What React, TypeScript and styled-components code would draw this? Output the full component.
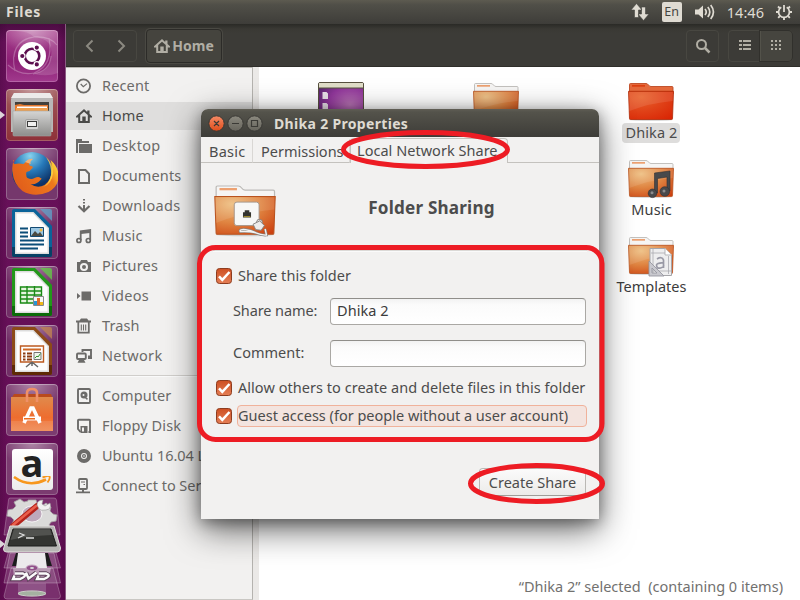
import React from "react";
import styled, { createGlobalStyle, css } from "styled-components";

const GlobalStyle = createGlobalStyle`
  * { box-sizing: border-box; }
  body { margin: 0; overflow: hidden; }
`;

const Screen = styled.div`
  position: relative;
  display: flex;
  flex-direction: column;
  width: 800px;
  height: 600px;
  overflow: hidden;
  font: 14.5px/20px "Noto Sans", "Open Sans", sans-serif;
  color: #4c4c4c;
  background: #fff;
`;

const Label = styled.span<{ $track?: number }>`
  white-space: pre;
  letter-spacing: ${(p) => p.$track ?? 0}px;
`;

/* ---------- top panel ---------- */

const Panel = styled.header`
  display: flex;
  align-items: center;
  justify-content: space-between;
  flex: none;
  height: 24px;
  padding: 0 8px 0 6px;
  color: #dfdbd2;
  background: linear-gradient(#5d5b50, #504f48 20%, #3e3d39);
`;
const AppName = styled(Label)`
  font-weight: 700;
  font-size: 14px;
`;
const Indicators = styled.div`
  display: flex;
  align-items: center;
  gap: 12px;
  svg { display: block; }
`;
const Clock = styled(Label)`
  margin-top: -1px;
`;
const Keyboard = styled.span`
  width: 20px;
  height: 20px;
  border-radius: 2px;
  background: #dfdbd2;
  color: #45443f;
  font-size: 12.5px;
  line-height: 20px;
  text-align: center;
`;

/* ---------- launcher ---------- */

const Desk = styled.div`
  display: flex;
  flex: 1;
  min-height: 0;
`;
const Launcher = styled.nav`
  display: flex;
  flex-direction: column;
  flex: none;
  gap: 7px;
  width: 66px;
  padding-top: 6px;
  border-right: 1px solid #8b5a83;
  background: linear-gradient(90deg, rgba(40, 0, 35, .18), transparent 12% 88%, rgba(40, 0, 35, .22)),
    linear-gradient(#4d0c43, #68105a 18px, #640e55);
`;
const Slot = styled.div<{ $running?: boolean }>`
  display: flex;
  align-items: center;
  gap: 1px;
  padding-left: ${(p) => (p.$running ? 0 : 6)}px;
`;
const RunMark = styled.i`
  width: 5px;
  border: 4px solid transparent;
  border-left: 5px solid #dcd5da;
  border-right: 0;
`;
const Tile = styled.div<{ $tint: string }>`
  display: flex;
  align-items: center;
  justify-content: center;
  width: 52px;
  height: 52px;
  border-radius: 4px;
  background: radial-gradient(ellipse 60% 45% at 50% 0, rgba(255, 255, 255, .38), transparent), ${(p) => p.$tint};
  box-shadow: inset 0 0 0 1px rgba(255, 255, 255, .22), inset 0 1px 1px rgba(255, 255, 255, .2);
  svg { display: block; }
`;
const Folded = styled.div`
  margin-top: -5px;
  height: 104px;
  svg { display: block; }
`;

/* ---------- file manager ---------- */

const Manager = styled.main`
  display: flex;
  flex-direction: column;
  flex: 1;
  min-width: 0;
`;
const Toolbar = styled.div`
  display: flex;
  align-items: center;
  flex: none;
  height: 43px;
  padding: 0 7px;
  color: #b1aea4;
  background: linear-gradient(#2a2a26, #3a3934 5px, #3c3b37 10px);
  border-bottom: 1px solid #2f2e2a;
`;
const ButtonGroup = styled.div<{ $raised?: boolean }>`
  display: flex;
  height: ${(p) => (p.$raised ? 34 : 32)}px;
  margin-top: ${(p) => (p.$raised ? 2 : 1)}px;
  border: 1px solid ${(p) => (p.$raised ? "#2c2b28" : "#484741")};
  border-radius: 4px;
  background: ${(p) => (p.$raised ? "#45443e" : "transparent")};
  ${(p) => p.$raised && css`box-shadow: 0 0 0 1px #4a4943;`}
`;
const ToolButton = styled.button<{ $active?: boolean }>`
  display: flex;
  align-items: center;
  justify-content: center;
  width: ${(p) => (p.$active ? 32 : 31)}px;
  padding: 0;
  border: 0;
  border-radius: 0 4px 4px 0;
  color: inherit;
  background: ${(p) => (p.$active ? "#46453f" : "transparent")};
  ${(p) => p.$active && css`box-shadow: inset 1px 0 #53524a, 0 0 0 1px #31302c;`}
`;
const PathButton = styled(ToolButton)`
  width: 74px;
  gap: 2px;
  font: inherit;
  font-size: 14px;
  font-weight: 700;
`;
const Spacer = styled.div<{ $w?: number }>`
  flex: ${(p) => (p.$w ? `0 0 ${p.$w}px` : "1")};
`;

const Body = styled.div`
  display: flex;
  flex: 1;
  min-height: 0;
`;
const Sidebar = styled.ul`
  display: flex;
  flex-direction: column;
  flex: none;
  gap: 2px;
  width: 187px;
  margin: 0;
  padding: 4px 0 0;
  overflow: hidden;
  list-style: none;
  background: #f2f1f0;
  border-right: 1px solid #b5b3af;
  border-top: 1px solid #b9b7b2;
  border-bottom: 1px solid #c9c7c3;
`;
const Place = styled.li<{ $current?: boolean }>`
  display: flex;
  align-items: center;
  flex: none;
  gap: 10px;
  height: 28px;
  padding-left: 10px;
  color: ${(p) => (p.$current ? "#4a4a48" : "#6c6b69")};
  background: ${(p) => (p.$current ? "#dfdedd" : "transparent")};
  svg { flex: none; }
  span { margin-top: -2px; }
`;
const Rule = styled.li`
  flex: none;
  height: 2px;
  margin: 3px 0;
  border-top: 1px solid #d0cecb;
  background: #fafafa;
`;
const Gutter = styled.div`
  flex: none;
  width: 6px;
  background: #ebe9e7;
`;
const Content = styled.section`
  display: flex;
  flex-direction: column;
  justify-content: space-between;
  flex: 1;
  padding: 15px 17px 4px 4px;
`;
const Grid = styled.div`
  display: grid;
  grid-template-columns: repeat(3, 155px);
  grid-auto-flow: column;
  grid-template-rows: repeat(3, 77px);
`;
const File = styled.figure`
  display: flex;
  flex-direction: column;
  align-items: center;
  gap: 3px;
  margin: 0;
  color: #3c3c3c;
  svg { display: block; flex: none; }
`;
const Caption = styled.figcaption<{ $selected?: boolean; $track: number }>`
  margin-left: 1px;
  padding: 0 3px 1px 4px;
  border-radius: 4px;
  line-height: 19px;
  color: ${(p) => (p.$selected ? "#4c4c4c" : "inherit")};
  background: ${(p) => (p.$selected ? "#dedddc" : "transparent")};
  letter-spacing: ${(p) => p.$track}px;
`;
const Status = styled(Label)`
  align-self: flex-end;
  color: #72716f;
`;

/* ---------- dialog ---------- */

const Dialog = styled.section`
  position: absolute;
  left: 201px;
  top: 109px;
  display: flex;
  flex-direction: column;
  width: 398px;
  height: 410px;
  border-radius: 7px 7px 0 0;
  background: #f2f1f0;
  box-shadow: 0 10px 34px rgba(0, 0, 0, .62), 0 3px 14px rgba(0, 0, 0, .32);
`;
const TitleBar = styled.header`
  display: flex;
  align-items: center;
  flex: none;
  height: 28px;
  padding: 0 8px 0 7px;
  border-radius: 7px 7px 0 0;
  color: #dfdbd2;
  background: linear-gradient(#605e55, #54534b 3px, #3d3c38);
  svg { margin-right: 10px; }
`;
const DialogTitle = styled(Label)`
  margin-top: 2px;
  font-weight: 700;
  font-size: 14px;
`;
const TabBar = styled.div`
  display: flex;
  flex: none;
  height: 26px;
`;
const Tab = styled.div<{ $active?: boolean; $w: number }>`
  width: ${(p) => p.$w}px;
  margin-top: ${(p) => (p.$active ? 1 : 2)}px;
  padding: 2px 0 0 8px;
  line-height: 21px;
  border-right: 1px solid #d9d7d4;
  border-bottom: 1px solid #c4c2be;
  ${(p) => p.$active && css`
    border: 1px solid #c4c2be;
    border-bottom: 0;
    border-radius: 4px 4px 0 0;
    padding: 1px 0 0 6px;
    line-height: 20px;
  `}
`;
const TabFill = styled.div`
  flex: 1;
  border-bottom: 1px solid #c4c2be;
`;
const Page = styled.div`
  display: flex;
  flex-direction: column;
  flex: 1;
  padding: 18px 12px 23px;
`;
const Heading = styled.div`
  display: flex;
  align-items: center;
  height: 56px;
  padding-left: 1px;
  svg { flex: none; }
`;
const HeadingText = styled.h1`
  flex: 1;
  margin: 0;
  padding: 0 0 2px 0;
  text-align: center;
  font-size: 17.1px;
  line-height: 24px;
  letter-spacing: .2px;
`;
const Divider = styled.div`
  height: 2px;
  margin: 13px 0 10px;
  border-top: 1px solid #dbd9d6;
  background: #fafafa;
`;
const CheckRow = styled.label`
  display: flex;
  align-items: center;
  gap: 5px;
  height: 28px;
  padding-left: 3px;
  svg { flex: none; }
`;
const CheckText = styled(Label)<{ $focused?: boolean }>`
  flex: 1;
  height: 22px;
  border-radius: 4px;
  line-height: 18px;
  border: 1px solid ${(p) => (p.$focused ? "#f0b29b" : "transparent")};
  background: ${(p) => (p.$focused ? "#f3e4df" : "transparent")};
`;
const FieldRow = styled.div`
  display: flex;
  align-items: center;
  height: 42px;
  padding: 0 1px 0 20px;
`;
const FieldName = styled(Label)`
  width: 97px;
  margin-top: -2px;
`;
const Field = styled.div`
  flex: 1;
  height: 27px;
  padding: 1px 6px;
  border: 1px solid #aaa8a4;
  border-top-color: #908e8a;
  border-radius: 4px;
  color: #3c3c3c;
  background: linear-gradient(#f2f2f2, #fbfbfb 6px, #fff);
`;
const CreateButton = styled.button`
  align-self: flex-end;
  width: 107px;
  height: 28px;
  margin: auto 1px 0 0;
  padding: 0;
  border: 1px solid #bab8b4;
  border-bottom-color: #9f9d99;
  border-radius: 4px;
  color: #4c4c4c;
  font: inherit;
  letter-spacing: .02px;
  background: linear-gradient(#fbfbfb, #ecebe9);
`;
const Highlights = styled.svg`
  position: absolute;
  inset: 0;
  pointer-events: none;
`;

/* ---------- drawings ---------- */

const HOUSE = "M8 1 0 8.200v1.300h2.200V15h11.600V9.500H16V8.200L13.500 6V2.500h-2.300v1.400zM8 3.700l3.800 3.400V13H9.700V8.500H6.300V13H4.200V7.100z";

const glyphs: Record<string, React.ReactNode> = {
  recent: <><circle cx="7.500" cy="8" r="6.600" fill="none" stroke="currentColor" strokeWidth="1.800" /><path d="M4.700 6 7.300 8.700 11 5.600" fill="none" stroke="currentColor" strokeWidth="1.200" /></>,
  home: <path d={HOUSE} fillRule="evenodd" />,
  desktop: <path d="M0 1h6v2h7v2H2v10H0zM3 6h13v9H3z" />,
  documents: <path d="M3 2h6.500L13 5.700V15H3z" fill="none" stroke="currentColor" strokeWidth="2" />,
  downloads: <><path d="M7 1h2v1.500H7zM7 4h2v1.500H7zM7 7h2v5H7z" /><path d="M2.500 8 8 13.300 13.500 8" fill="none" stroke="currentColor" strokeWidth="2.200" /></>,
  music: <><path d="M4.700 12V3.200L14.200 2v10" fill="none" stroke="currentColor" strokeWidth="1.800" /><path d="M5 3 14 2v3L5 6z" /><circle cx="2.900" cy="12.500" r="2" fill="none" stroke="currentColor" strokeWidth="1.700" /><circle cx="12.300" cy="12.500" r="2" fill="none" stroke="currentColor" strokeWidth="1.700" /></>,
  pictures: <path fillRule="evenodd" d="M5 2h6l1 2h3v10H1V4h3zM8 5a4 4 0 1 0 0 8 4 4 0 0 0 0-8zm0 2a2 2 0 1 1 0 4 2 2 0 0 1 0-4z" />,
  videos: <path d="M5.500 3.500H15v9H5.500zM1 5l3.500 3L1 11z" />,
  trash: <><path d="M0 2.500h3.500L5 .5h6l1.500 2H15v2H0z" /><path d="M5.300 6.500v6M7.500 6.500v6M9.700 6.500v6" stroke="currentColor" strokeWidth="1.100" /><path d="M2.300 4v10.700h10.500V4" fill="none" stroke="currentColor" strokeWidth="1.800" /></>,
  network: <><path d="M6.500 4V2H15v6.500h-3" fill="none" stroke="currentColor" strokeWidth="1.900" /><path d="M12 9h4v2h-4z" /><rect x="1" y="5.500" width="8.800" height="5.500" rx="1" fill="none" stroke="currentColor" strokeWidth="1.900" /><path d="M3 12h5l1.500 2.800h-8z" /></>,
  computer: <><rect x="2" y="1" width="12" height="14" rx="1" fill="none" stroke="currentColor" strokeWidth="1.900" /><circle cx="8" cy="7" r="3.500" /><circle cx="7.500" cy="7" r="1" fill="#f2f1f0" /><path d="m8 9 4 1.500-1 1.500z" /></>,
  floppy: <><path d="M12.500 14H14V2.500a.8.8 0 0 0-.8-.8H2.800a.8.8 0 0 0-.8.8V11l2.500 3" fill="none" stroke="currentColor" strokeWidth="1.900" /><path fillRule="evenodd" d="M4.500 8h7v7H4.500zM6 9.500v4h2v-4z" /></>,
  disc: <path fillRule="evenodd" d="M8 1a7 7 0 1 0 0 14A7 7 0 0 0 8 1zm0 4a3 3 0 1 1 0 6 3 3 0 0 1 0-6zm0 1a2 2 0 1 0 0 4 2 2 0 0 0 0-4zm0 1.200a.8.8 0 1 1 0 1.600.8.8 0 0 1 0-1.600z" />,
  server: <><rect x="3" y="1" width="8" height="10" rx="1" fill="none" stroke="currentColor" strokeWidth="1.800" /><path d="M5 3.500h4v1H5zM7.500 6H9v1H7.500zM6 11h2v3H6zM0 13.500h14v1.800H0z" /></>,
};

const Glyph = ({ name, size = 16 }: { name: string; size?: number }) => (
  <svg width={size} height={size} viewBox="0 0 16 16" fill="currentColor">{glyphs[name]}</svg>
);

const Folder = ({ id, red, w = 46, h = 38, children }: { id: string; red?: boolean; w?: number; h?: number; children?: React.ReactNode }) => (
  <svg width={w} height={h} viewBox="0 0 46 38" overflow="visible">
    <defs>
      <radialGradient id={id} cx=".28" cy=".2" r="1">
        <stop offset="0" stopColor={red ? "#e8622c" : "#edbd7e"} />
        <stop offset=".5" stopColor={red ? "#e04218" : "#df8340"} />
        <stop offset="1" stopColor={red ? "#d92504" : "#cc4010"} />
      </radialGradient>
    </defs>
    <ellipse cx="23" cy="37.800" rx="22" ry="1.200" fill="#000" opacity=".14" />
    <path d="M1.500 12V2.500q0-1 1-1h15.500q1.500 0 2.500 1.500t2.500 1.500h21q1 0 1 1V12z" fill={red ? "#e4693b" : "#f6f5f4"} stroke={red ? "#bd4a22" : "#bcbab7"} strokeWidth=".9" />
    <rect x="4" y="3" width="13" height="1.700" fill={red ? "#dc3f10" : "#eda070"} />
    <path d="M.5 9.300h45L44.500 36.700q0 .8-.9.8H2.400q-.9 0-.9-.8z" fill={`url(#${id})`} stroke={red ? "#ad2a08" : "#b9531f"} strokeWidth=".8" />
    <path d="M1 10h44L44.700 19Q22 21 1.400 29z" fill="#fff" opacity=".1" />
    {children}
  </svg>
);

const DesktopFolder = () => (
  <svg width="46" height="38" viewBox="0 0 46 38">
    <defs><radialGradient id="desk" cx=".7" cy=".6" r=".8"><stop stopColor="#b873b4" /><stop offset=".6" stopColor="#90369a" /><stop offset="1" stopColor="#5b2670" /></radialGradient></defs>
    <rect x=".5" y=".5" width="45" height="37" rx="1.500" fill="url(#desk)" stroke="#57503f" />
    <rect x="1" y="1" width="44" height="5" fill="#e1dec9" />
    <path d="M1 6h44" stroke="#55553d" />
    <path d="M4.500 10h4l1.500 1.500V17H4.500zM4.500 21h4l1.500 1.500V28H4.500z" fill="#e8dfe8" />
  </svg>
);

const Music = () => (
  <g fill="#48494b" stroke="#303133" strokeWidth=".6">
    <path d="M26.500 14 42 12v20h-3V18l-9.500 1.500V34h-3z" />
    <circle cx="24.500" cy="34.300" r="4.300" /><circle cx="36.800" cy="32.500" r="4.800" />
    <circle cx="24" cy="33.800" r="1.500" fill="#8b8c8d" stroke="none" /><circle cx="36" cy="32" r="1.500" fill="#8b8c8d" stroke="none" />
  </g>
);

const Template = () => (
  <g>
    <path d="M22 12.500h15l6.500 6.500v20.500H22z" fill="#eeeeef" stroke="#a6a6aa" />
    <path d="M37 12.500V19h6.500" fill="#fff" stroke="#b5b5b8" />
    <path d="M25 13v26M40.500 20v18M23 17h14M23 35h21" stroke="#aaaab0" strokeWidth=".8" />
    <path d="M29 23q5-3 6.500 1v8M35.500 27q-6-.5-7 2 0 4 4 3t3-3" fill="none" stroke="#9999a5" strokeWidth="1.700" />
    <path d="M21 25v15h15zm3 7v5h5z" fill="#c8c8ce" stroke="#96969f" strokeWidth=".9" fillRule="evenodd" />
  </g>
);

const CABLE = "M31.500 36.500q-4-2-8-2.500-5-.5-4 1.500 6-.5 11 .8 5 2 8.500 1.700l-1-4.500";

const ShareFolder = () => (
  <Folder id="share" w={62} h={51}>
    <rect x="15" y="13.500" width="18.500" height="17.500" rx="2" fill="#f7f7f6" stroke="#a3948a" strokeWidth=".7" />
    <path d="M21.500 21h1.300v-1.500h3.400V21h1.300v4h-6z" fill="#33332f" />
    <path d="M22 24.300h5" stroke="#b29b2f" strokeWidth=".7" />
    <path d={CABLE} fill="none" stroke="#87837f" strokeWidth="2" />
    <path d={CABLE} fill="none" stroke="#f4f3f2" strokeWidth="1" />
    <path d="m29 30 5-2.500 3.500 3.500-2.500 3.500-4-.5zM31.500 28.500l1-2 3 .3.500 2" fill="#eeeceb" stroke="#84807d" strokeWidth=".7" />
  </Folder>
);

const Check = () => (
  <svg width="16" height="16" viewBox="0 0 16 16">
    <defs><linearGradient id="chk" x2="0" y2="1"><stop stopColor="#cd4f22" /><stop offset="1" stopColor="#e57f56" /></linearGradient></defs>
    <rect x=".5" y=".5" width="15" height="15" rx="3" fill="url(#chk)" stroke="#8d3c1f" />
    <path d="m3 8.300 3.300 3.500L13.500 4" fill="none" stroke="#fff" strokeWidth="2.500" />
  </svg>
);

const WindowButtons = () => (
  <svg width="56" height="18" viewBox="0 0 56 18">
    <defs>
      <linearGradient id="close" x2="0" y2="1"><stop stopColor="#f58b66" /><stop offset="1" stopColor="#df4c1a" /></linearGradient>
      <linearGradient id="plain" x2="0" y2="1"><stop stopColor="#8b897f" /><stop offset="1" stopColor="#66645c" /></linearGradient>
    </defs>
    <circle cx="8.500" cy="9.500" r="7.700" fill="url(#close)" stroke="#393834" />
    <circle cx="27.500" cy="9.500" r="7.700" fill="url(#plain)" stroke="#393834" />
    <circle cx="46.500" cy="9.500" r="7.700" fill="url(#plain)" stroke="#393834" />
    <path d="m6 7 5 5m0-5-5 5M24 9.500h7M43.500 6.500h6v6h-6z" fill="none" stroke="#3b3a36" strokeWidth="1.200" />
  </svg>
);

const Dash = () => (
  <svg width="52" height="52" viewBox="0 0 52 52">
    <g fill="none" stroke="#fff" opacity=".25" strokeWidth="1.200">
      <path d="M9 41Q2 12 28 7q16-1 23 8M43 8q5 27-15 35Q14 46 2 35M8 27q2-18 20-20M45 26q-1 15-18 18" />
    </g>
    <path d="M28 7q20 2 17 19 0 14-17 18 14 3 24-1V1H9q14 0 19 6z" fill="#fff" opacity=".15" />
    <circle cx="26" cy="26" r="14" fill="#fff" />
    <circle cx="26" cy="26" r="7.300" fill="none" stroke="#5c0f4e" strokeWidth="2.600" />
    <g stroke="#fff" strokeWidth="1.200" fill="#5c0f4e"><circle cx="16.300" cy="26" r="2.700" /><circle cx="30.800" cy="17.600" r="2.700" /><circle cx="30.800" cy="34.400" r="2.700" /></g>
  </svg>
);

const Cabinet = () => (
  <svg width="52" height="52" viewBox="0 0 52 52">
    <defs><linearGradient id="cab" x2="0" y2="1"><stop stopColor="#d5d5d4" /><stop offset="1" stopColor="#8d8d8b" /></linearGradient></defs>
    <path d="M8 4h36l3 6v33H5V10z" fill="#b9b8b7" /><path d="M8 4h36l3 5H5z" fill="#ecebea" />
    <path d="M9 13h34v10H9z" fill="#42403c" />
    <path d="M9 16l5-1 4 1h24v6H9z" fill="#e5782d" /><path d="M11 17.500h30v2H11z" fill="#fff" /><path d="M10 19h32v4H10z" fill="#f0a04f" />
    <path d="M7 22h38v24q0 1-1 1H8q-1 0-1-1z" fill="url(#cab)" stroke="#a5a4a3" strokeWidth=".6" />
    <rect x="19.500" y="30.500" width="13" height="10" rx="1.500" fill="#d5d5d4" stroke="#a2a2a1" /><rect x="21.500" y="32.500" width="9" height="5" fill="#f0f0ef" stroke="#3b3b3a" />
  </svg>
);

const Firefox = () => (
  <svg width="52" height="52" viewBox="0 0 52 52">
    <defs>
      <radialGradient id="globe" cx=".45" cy=".1" r=".75"><stop stopColor="#87d3ee" /><stop offset=".5" stopColor="#2779b9" /><stop offset="1" stopColor="#0d3266" /></radialGradient>
      <linearGradient id="fox" x1=".1" x2="1" y1=".6" y2=".2"><stop stopColor="#e2601b" /><stop offset=".7" stopColor="#ee7a1c" /><stop offset="1" stopColor="#ffe13a" /></linearGradient>
    </defs>
    <circle cx="26" cy="24" r="20" fill="url(#globe)" />
    <path d="M7 12q0 3 1.500 4 4-1 9 0 4-4 7-4-3 4 0 6 3 0 2 2-2 3-6 4-1 4 1 6 4 2 7 0 4-2 6 0 2 0 0 2-4 5-10 4 7 5 14 1 7-5 7-14 1-6-1-11 7 6 8 14 1 12-10 18-14 6-26-1-9-7-10-19-1-6 1.500-12z" fill="url(#fox)" />
    <path d="M40 9q6 9 5 18-2 9-8 12 9-3 10-14 0-10-7-16z" fill="#ffe04a" opacity=".75" />
    <path d="M19 14q4-4 8-3-4 3-2 5z" fill="#f5b175" />
  </svg>
);

const Office = ({ color, light, edge, children }: { color: string; light: string; edge: string; children: React.ReactNode }) => (
  <svg width="52" height="52" viewBox="0 0 52 52">
    <path d="M8 2h21l17 17v29q0 2-2 2H8q-2 0-2-2V4q0-2 2-2z" fill={color} />
    <path d="M34 2h10q2 0 2 2v10z" fill={light} opacity=".75" />
    <path d="M6 40v8q0 2 2 2h36q2 0 2-2v-8h-3v7H9v-7z" fill={edge} />
    <path d="M9 5h18.500L43 21v26H9z" fill="#dcdcdc" /><path d="M10.500 6.500H27L41.500 21.500v24h-31z" fill="#fdfdfd" />
    {children}
  </svg>
);

const Bag = () => (
  <svg width="52" height="52" viewBox="0 0 52 52">
    <defs><linearGradient id="bag" x2="0" y2="1"><stop stopColor="#e08a4c" /><stop offset=".6" stopColor="#ee6d2f" /><stop offset="1" stopColor="#ef8750" /></linearGradient></defs>
    <path d="M8 10h37l2 5H5z" fill="#b94a1d" /><path d="M5 13h42v34H5z" fill="url(#bag)" />
    <path d="M21 18V9q0-4 5-4t5 4v9" fill="none" stroke="#ef9068" strokeWidth="2.600" />
    <path d="m18 39 7-15h2l7 15" fill="none" stroke="#fff" strokeWidth="3.600" /><path d="M17 32.500h18v4H17z" fill="#fff" /><path d="M18 34h11v1.500H18z" fill="#ed6d20" />
    <path d="M5 37h42v10H5z" fill="#fff" opacity=".1" />
  </svg>
);

const AmazonCard = styled.div`
  display: flex;
  flex-direction: column;
  align-items: center;
  width: 41px;
  height: 41px;
  border-radius: 3px;
  background: linear-gradient(#fff, #ececec);
`;
const AmazonLetter = styled.b`
  height: 27px;
  color: #222;
  font: 700 38px/27px "Open Sans", sans-serif;
`;

const Stack = () => (
  <svg width="65" height="104" viewBox="0 0 65 104">
    <g fill="#fff" fillOpacity=".14" stroke="#fff" strokeOpacity=".25">
      <path d="M10 1h44q2 0 2.500 2L60 38H4L8.500 3q0-2 1.500-2z" />
      <path d="M10 49h44l6.500 22H4z" /><path d="M10 56h44l6.500 30H4z" /><path d="M11 71h42l7.500 28q0 3-3 3H7q-3 0-3-3z" />
    </g>
    <path fill="#dadad9" stroke="#a9a8a8" strokeWidth=".8" d="M28 3h8l1 4 5 2 4-3 5 4-1 4 3 3 4 1-1 6-5 1-2 3 2 4-6 3-5-3-3 1-2 2h-7l-2-3-5-1-4 1-5-5 2-4-3-3-4-1 1-6 5-1 3-3-2-4 6-3 4 3 4-1z" />
    <ellipse cx="32" cy="17" rx="10" ry="8" fill="#bda9bc" stroke="#fff" strokeWidth=".8" />
    <path d="M13 29 37 9" stroke="#b4231c" strokeWidth="6" strokeLinecap="round" /><path d="M13 28 36 9" stroke="#ea5e4c" strokeWidth="2.500" strokeLinecap="round" />
    <path d="M37 8q0-5 6-5l-1 4 3 2 5-3q2 6-4 7-5 1-7-1z" fill="#f1f1f0" stroke="#999" strokeWidth=".6" />
    <path d="M10 29h44l6.500 22q0 4-3 4H6.500q-3 0-3-3z" fill="#b7b6b4" stroke="#dfdedc" />
    <path d="M13 32h38l5.500 17H8z" fill="#333431" stroke="#1d1d1c" /><path d="M14 32h36l2 6Q25 39 10.500 43z" fill="#fff" opacity=".15" />
    <path d="m19 36 5 2-6 3M26 41h8" fill="none" stroke="#dedede" strokeWidth="1.300" />
    <path d="M16 56h32l4 13H12z" fill="#1c1b1d" /><path d="M18 56h27l2 15H16z" fill="#eceaec" />
    <path d="M13 71h38l-2 9H14z" fill="#cdbccb" opacity=".7" /><ellipse cx="32" cy="71" rx="6" ry="3" fill="#91518a" stroke="#c8aac5" /><ellipse cx="32" cy="71" rx="2" ry="1" fill="#ddd" />
    <g fill="none" stroke="#5d4159" strokeWidth="4.400"><path d="M15 76.500h8q4 1.500 0 4l-3 1.500h-7l1.500-3.500M26 75.500l2.500 6 8-6M39 76.500h7q5 1.500 1 4l-3 1.500h-7l1.500-3.500" /></g>
    <g fill="none" stroke="#fafafa" strokeWidth="2.400"><path d="M15 76.500h8q4 1.500 0 4l-3 1.500h-7l1.500-3.500M26 75.500l2.500 6 8-6M39 76.500h7q5 1.500 1 4l-3 1.500h-7l1.500-3.500" /></g>
    <path d="M18 86h28v11H18z" fill="#b893b4" opacity=".35" /><ellipse cx="32" cy="96.500" rx="14" ry="2.600" fill="#a5b1a1" stroke="#ccd0c9" />
    <path d="M0 43v8l5-4z" fill="#dcd5da" />
  </svg>
);

/* ---------- data ---------- */

const launcherItems: { tint: string; running?: boolean; art: React.ReactNode }[] = [
  { tint: "linear-gradient(#a9438f, #8c1f75 60%, #a13a8d)", art: <Dash /> },
  { tint: "linear-gradient(#a05a5c, #8e3038)", running: true, art: <Cabinet /> },
  { tint: "#75376c", art: <Firefox /> },
  {
    tint: "#712e66", art: (
      <Office color="#0a6399" light="#5fa3cb" edge="#064165">
        <path d="M14 21.500h8M14 25.500h8M14 29.500h8M14 33.500h24M14 37.500h24M14 41.500h18" stroke="#0b4d78" strokeWidth="2" />
        <path d="M24.500 20.500h13v9h-13z" fill="#9bc7e3" stroke="#134a73" /><path d="m25 29 4-5 3 3 2-2 3 4z" fill="#4a4a42" /><circle cx="35" cy="23" r="1.500" fill="#f0b63f" />
      </Office>),
  },
  {
    tint: "#712e66", art: (
      <Office color="#22971a" light="#62cf45" edge="#0c6b0a">
        <path d="M14 20.500h22v17H14z" fill="#e6f5df" /><path d="M14.500 21h21v16h-21zM14 25h22M14 29h22M14 33h22M21 20v17M28.500 20v17" fill="none" stroke="#1a8a16" strokeWidth="1.400" />
        <path d="M27.500 30.500h10v9h-10z" fill="#f6f6f6" stroke="#888" /><path d="M28 35h3v4h-3z" fill="#2795d6" /><path d="M31 32h3v7h-3z" fill="#de6a28" /><path d="M34 36h3v3h-3z" fill="#f0b918" />
      </Office>),
  },
  {
    tint: "#712e66", art: (
      <Office color="#8c4a18" light="#c28650" edge="#5e2a06">
        <path d="M14.500 21h23v16h-23z" fill="#fff" stroke="#bc5a20" strokeWidth="1.400" /><path d="M17 24.500h18" stroke="#cf6927" strokeWidth="2" />
        <path d="M17 28.500h2.500M17 31.500h2.500M17 34.500h2.500M21 28.500h5M21 31.500h5M21 34.500h5" stroke="#8a3b10" strokeWidth="1.800" /><path d="M28 27.500h7v7h-7z" fill="#eff6eb" stroke="#777" /><path d="m29 33 2-2 1 1 2.500-3.500" fill="none" stroke="#33932c" />
        <path d="m26 37-6 5m6-5 6 5m-6-5v4" stroke="#666" strokeWidth="1.500" />
      </Office>),
  },
  { tint: "#7b3b70", art: <Bag /> },
  {
    tint: "#7b3b70", art: (
      <AmazonCard>
        <AmazonLetter>a</AmazonLetter>
        <svg width="40" height="14" viewBox="0 0 40 14"><path d="M2 1Q17 12 34 3.500" fill="none" stroke="#f7971d" strokeWidth="2.600" /><path d="M30.500 1.500q6-2.500 7-1 1 2-2 6" fill="none" stroke="#f7971d" strokeWidth="1.900" /></svg>
      </AmazonCard>),
  },
];

const places: [string, string, number][] = [
  ["recent", "Recent", 0.14], ["home", "Home", 0.12], ["desktop", "Desktop", 0.3], ["documents", "Documents", 0.14],
  ["downloads", "Downloads", 0.27], ["music", "Music", 0.15], ["pictures", "Pictures", 0.2], ["videos", "Videos", 0.28],
  ["trash", "Trash", 0.1], ["network", "Network", 0.3],
];
const devices: [string, string, number][] = [
  ["computer", "Computer", 0.08], ["floppy", "Floppy Disk", 0.12], ["disc", "Ubuntu 16.04 LTS", -0.06], ["server", "Connect to Server", -0.04],
];

const PlaceRow = ({ item: [icon, text, track] }: { item: [string, string, number] }) => (
  <Place $current={icon === "home"}><Glyph name={icon} /><Label $track={track}>{text}</Label></Place>
);

export default function App() {
  return (
    <Screen>
      <GlobalStyle />
      <Panel>
        <AppName $track={0.7}>Files</AppName>
        <Indicators>
          <svg width="19" height="18" viewBox="0 0 19 18" fill="#dfdbd2"><path d="M5.500 .5 11 7H7.500v7.500h-4V7H0zM12.500 17.500 7 11h3.500V4h4v7H18z" stroke="#45443f" strokeWidth=".6" /></svg>
          <Keyboard>En</Keyboard>
          <svg width="21" height="18" viewBox="0 0 21 18" fill="#dfdbd2"><path d="M1 6.500h3.500L9 2.500v13l-4.500-4H1z" /><path d="M11 6q2.500 3 0 6M13.800 4q4 5 0 10M16.700 2q5.500 7 0 14" fill="none" stroke="#dfdbd2" strokeWidth="1.700" /></svg>
          <Clock $track={0.05}>14:46</Clock>
          <svg width="16" height="16" viewBox="0 0 16 16" fill="none" stroke="#dfdbd2"><path d="M5.300 3.300a5.400 5.400 0 1 0 5.400 0" strokeWidth="1.700" /><path d="M8 1v7" strokeWidth="1.800" /><path d="m2 2.500 1.700 1.600M14 2.500l-1.700 1.600M0 8h2.500M13.500 8H16M2.200 13.800l1.600-1.600m10 1.600-1.600-1.600M8 13.500V16" strokeWidth="1.900" /></svg>
        </Indicators>
      </Panel>

      <Desk>
        <Launcher>
          {launcherItems.map((item, i) => (
            <Slot key={i} $running={item.running}>{item.running && <RunMark />}<Tile $tint={item.tint}>{item.art}</Tile></Slot>
          ))}
          <Folded><Stack /></Folded>
        </Launcher>

        <Manager>
          <Toolbar>
            <ButtonGroup>
              <ToolButton><svg width="14" height="14" viewBox="0 0 14 14"><path d="M9.500 1.500 4 7l5.500 5.500" fill="none" stroke="#8b8980" strokeWidth="2" /></svg></ToolButton>
              <ToolButton><svg width="14" height="14" viewBox="0 0 14 14"><path d="M4.500 1.500 10 7l-5.500 5.500" fill="none" stroke="#8b8980" strokeWidth="2" /></svg></ToolButton>
            </ButtonGroup>
            <Spacer $w={9} />
            <ButtonGroup $raised><PathButton><Glyph name="home" /><Label $track={0}>Home</Label></PathButton></ButtonGroup>
            <Spacer />
            <ButtonGroup><ToolButton><svg width="16" height="16" viewBox="0 0 16 16" fill="none" stroke="#b1aea4"><circle cx="6.500" cy="6.500" r="4.500" strokeWidth="2" /><path d="m10 10 4.500 4.500" strokeWidth="2.500" /></svg></ToolButton></ButtonGroup>
            <Spacer $w={9} />
            <ButtonGroup>
              <ToolButton><svg width="12" height="11" viewBox="0 0 12 11" fill="#b1aea4"><path d="M0 0h3v2H0zM4 0h8v2H4zM0 4h3v2H0zM4 4h8v2H4zM0 8h3v2H0zM4 8h8v2H4z" /></svg></ToolButton>
              <ToolButton $active><svg width="11" height="11" viewBox="0 0 11 11" fill="#b1aea4"><path d="M0 0h2v2H0zM4 0h2v2H4zM8 0h2v2H8zM0 4h2v2H0zM4 4h2v2H4zM8 4h2v2H8zM0 8h2v2H0zM4 8h2v2H4zM8 8h2v2H8z" /></svg></ToolButton>
            </ButtonGroup>
          </Toolbar>

          <Body>
            <Sidebar>
              {places.map((p) => <PlaceRow key={p[0]} item={p} />)}
              <Rule />
              {devices.map((p) => <PlaceRow key={p[0]} item={p} />)}
            </Sidebar>
            <Gutter />
            <Content>
              <Grid>
                <File><DesktopFolder /></File>
                <File /><File />
                <File><Folder id="f-docs" /></File>
                <File /><File />
                <File><Folder id="f-dhika" red /><Caption $selected $track={0.08}>Dhika 2</Caption></File>
                <File><Folder id="f-music"><Music /></Folder><Caption $track={0.15}>Music</Caption></File>
                <File><Folder id="f-templates"><Template /></Folder><Caption $track={0}>Templates</Caption></File>
              </Grid>
              <Status $track={0.01}>“Dhika 2” selected  (containing 0 items)</Status>
            </Content>
          </Body>
        </Manager>
      </Desk>

      <Dialog>
        <TitleBar><WindowButtons /><DialogTitle $track={0.32}>Dhika 2 Properties</DialogTitle></TitleBar>
        <TabBar>
          <Tab $w={52}><Label $track={0.25}>Basic</Label></Tab>
          <Tab $w={97}><Label $track={0}>Permissions</Label></Tab>
          <Tab $w={158} $active><Label $track={0.03}>Local Network Share</Label></Tab>
          <TabFill />
        </TabBar>
        <Page>
          <Heading><ShareFolder /><HeadingText>Folder Sharing</HeadingText></Heading>
          <Divider />
          <CheckRow><Check /><CheckText $track={0.07}>Share this folder</CheckText></CheckRow>
          <FieldRow><FieldName $track={-0.1}>Share name:</FieldName><Field><Label $track={0.05}>Dhika 2</Label></Field></FieldRow>
          <FieldRow><FieldName $track={0}>Comment:</FieldName><Field /></FieldRow>
          <CheckRow><Check /><CheckText $track={0.04}>Allow others to create and delete files in this folder</CheckText></CheckRow>
          <CheckRow><Check /><CheckText $track={0} $focused>Guest access (for people without a user account)</CheckText></CheckRow>
          <CreateButton>Create Share</CreateButton>
        </Page>
      </Dialog>

      <Highlights width="800" height="600" viewBox="0 0 800 600" fill="none" stroke="#ed1c24" strokeWidth="5">
        <ellipse cx="425.500" cy="149.500" rx="82" ry="17" />
        <rect x="199.500" y="247.500" width="402.500" height="192" rx="16" />
        <ellipse cx="536.500" cy="483.500" rx="66" ry="18" />
      </Highlights>
    </Screen>
  );
}
